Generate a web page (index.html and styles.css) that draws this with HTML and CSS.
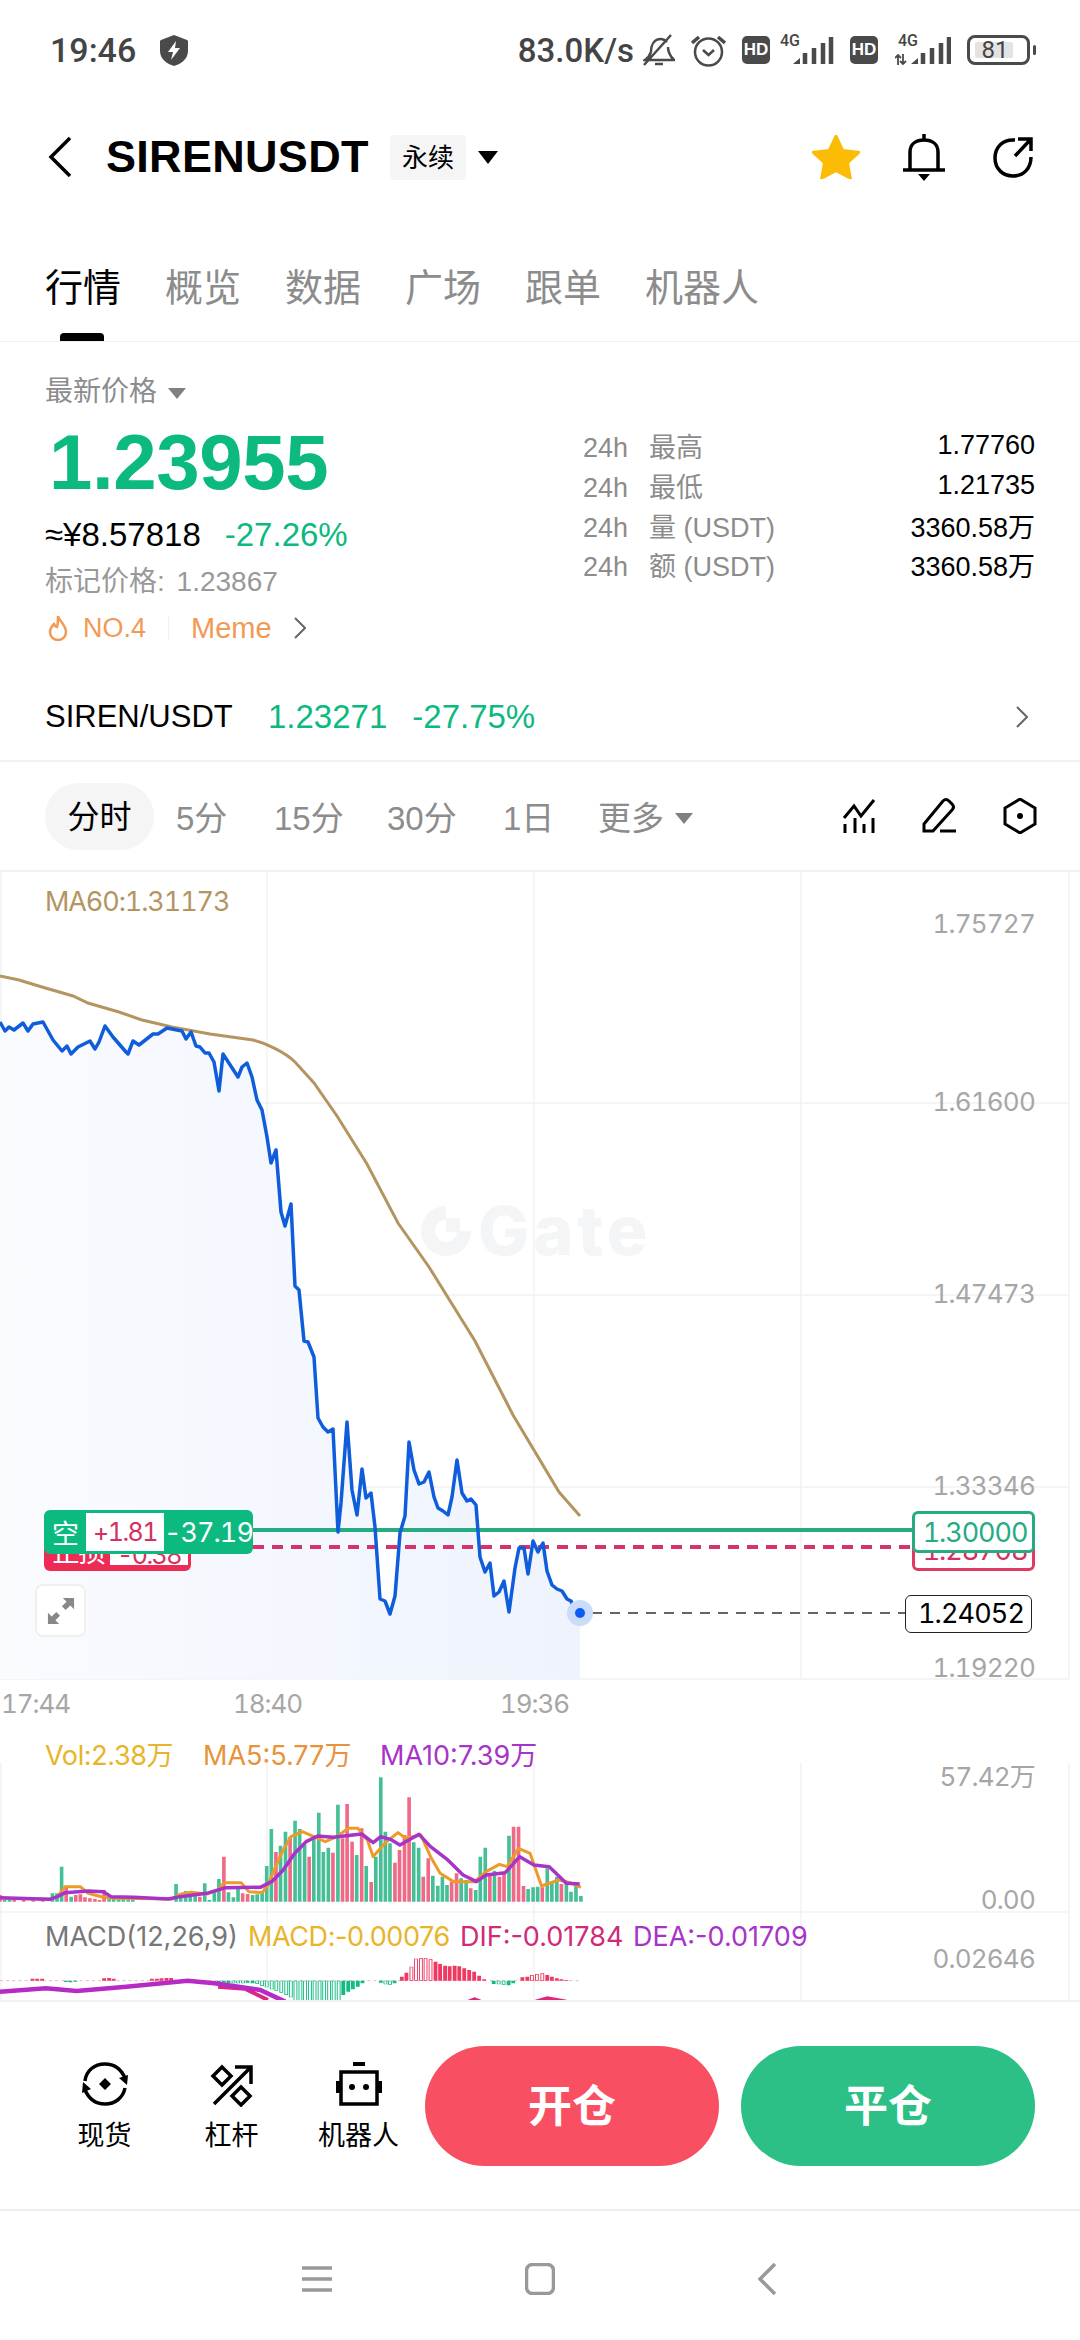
FILE: index.html
```html
<!DOCTYPE html>
<html lang="zh">
<head>
    <meta charset="UTF-8">
    <meta name="viewport" content="width=device-width, initial-scale=1.0">
    <title>SIRENUSDT</title>
    <link rel="stylesheet" href="styles.css">
</head>
<body>
<div class="page">

    <div class="status">
        <div class="status-left">
            <span class="clock">19:46</span>
            <svg class="ico-shield" viewBox="0 0 28 31"><path class="fill-dark" d="M14 0L27 5C28 5.500 28 6 28 7V16C28 24 21 29 14 31C7 29 0 24 0 16V7C0 6 0 5.500 1 5Z"/><path class="fill-white" d="M16 6L8 17H13L11 25L20 13H15Z"/></svg>
        </div>
        <div class="status-right">
            <span class="speed">83.0K/s</span>
            <svg class="ico-belloff" viewBox="0 0 32 32"><path class="line-dark" d="M8 18C8 11 11 5 18 5C20 5 22 6 24 8M25 13C25 18 27 22 31 26H2C5 24 7 21 8 18M12 30H20M28 1L1 31"/></svg>
            <svg class="ico-alarm" viewBox="0 0 35 34"><circle class="line-dark" cx="17.500" cy="19" r="13.500"/><path class="line-thick" d="M1 10L8 4M34 10L27 4"/><path class="line-dark" d="M12 17L17.500 22L23 17"/></svg>
            <span class="hd">HD</span>
            <svg class="ico-net" viewBox="0 -8 54 40"><text class="net-text" x="0" y="12">4G</text><path class="fill-dark" d="M13 30L20 24V30Z"/><path class="bars-dark" d="M25 30V19M34 30V14M43 30V9M51 30V3"/></svg>
            <span class="hd hd-2">HD</span>
            <svg class="ico-net net-2" viewBox="0 -8 56 40"><text class="net-text" x="3" y="12">4G</text><path class="line-thin" d="M3 31V21M0 24L3 21L6 24M8 20V30M5 27L8 30L11 27"/><path class="fill-dark" d="M16 30L23 24V30Z"/><path class="bars-dark" d="M28 30V19M37 30V14M46 30V9M54 30V3"/></svg>
            <span class="battery"><span class="battery-fill"></span><span class="battery-num">81</span></span>
        </div>
    </div>

    <div class="head">
        <div class="head-left">
            <svg class="ico-back" viewBox="0 0 24 40"><path class="line-black" d="M22 1L3 20L22 39"/></svg>
            <span class="symbol">SIRENUSDT</span>
            <span class="perp">永续</span>
            <span class="tri-black"></span>
        </div>
        <div class="head-right">
            <svg class="ico-star" viewBox="0 0 48 44"><path class="fill-star" d="M24 0L31 15L48 17L36 28L39 44L24 36L9 44L12 28L0 17L17 15Z"/></svg>
            <svg class="ico-bell" viewBox="0 0 42 47"><path class="line-black" d="M7 35V18C7 10 13 6 21 6C29 6 35 10 35 18V35M0 36H42M21 0V5"/><path class="fill-black" d="M15 40H27L21 47Z"/></svg>
            <svg class="ico-share" viewBox="0 0 40 41"><path class="line-black" d="M22 3C10 2 2 10 2 21C2 32 10 39 20 39C31 39 38 31 38 20M38 2L22 19M25 2H38V14"/></svg>
        </div>
    </div>

    <div class="tabs">
        <span class="tab tab-on">行情</span>
        <span class="tab">概览</span>
        <span class="tab">数据</span>
        <span class="tab">广场</span>
        <span class="tab">跟单</span>
        <span class="tab">机器人</span>
    </div>

    <div class="quote">
        <div class="quote-left">
            <div class="last-label">最新价格<span class="tri-grey"></span></div>
            <div class="price">1.23955</div>
            <div class="sub"><span>≈¥8.57818</span><span class="green">-27.26%</span></div>
            <div class="mark">标记价格: 1.23867</div>
            <div class="tags">
                <svg class="ico-flame" viewBox="0 0 20 26"><path class="line-orange" d="M10 1C11 6 18 10 18 17C18 22 14 25 10 25C6 25 2 22 2 17C2 13 4 11 6 9C7 11 8 12 9 12C10 9 10 5 10 1Z"/></svg>
                <span class="tag-text">NO.4</span>
                <span class="tag-sep"></span>
                <span class="tag-text tag-meme">Meme</span>
                <svg class="ico-chev" viewBox="0 0 12 22"><path class="line-grey" d="M1 1L11 11L1 21"/></svg>
            </div>
        </div>
        <div class="stats">
            <div class="stat"><span class="stat-name"><i>24h</i>最高</span><b>1.77760</b></div>
            <div class="stat"><span class="stat-name"><i>24h</i>最低</span><b>1.21735</b></div>
            <div class="stat"><span class="stat-name"><i>24h</i>量 (USDT)</span><b>3360.58万</b></div>
            <div class="stat"><span class="stat-name"><i>24h</i>额 (USDT)</span><b>3360.58万</b></div>
        </div>
    </div>

    <div class="spot">
        <span class="spot-name">SIREN/USDT</span>
        <span class="spot-num">1.23271</span>
        <span class="spot-num">-27.75%</span>
        <svg class="ico-chev spot-chev" viewBox="0 0 12 22"><path class="line-grey" d="M1 1L11 11L1 21"/></svg>
    </div>

    <div class="times">
        <span class="time-on">分时</span>
        <span class="time t5">5分</span>
        <span class="time t15">15分</span>
        <span class="time t30">30分</span>
        <span class="time t1d">1日</span>
        <span class="time tmore">更多<span class="tri-grey"></span></span>
        <div class="tools">
            <svg class="ico-tool" viewBox="0 0 36 36"><path class="line-black2" d="M2 20L12 8L19 18L32 2M3 26V35M13 20V35M22 26V35M31 20V35"/></svg>
            <svg class="ico-tool" viewBox="0 0 36 36"><path class="line-black2" d="M2 26L21 3C23 1 25 1 27 3L30 6C32 8 32 10 30 12L11 33H2ZM18 33H34"/></svg>
            <svg class="ico-tool" viewBox="0 0 36 36"><path class="line-black2" d="M18 1L33 10V26L18 35L3 26V10Z"/><circle class="fill-black" cx="18" cy="18" r="3"/></svg>
        </div>
    </div>

    <div class="chart">
        <svg class="chart-svg" viewBox="0 872 1080 853">
            <defs>
                <linearGradient id="area" x1="0" x2="1" y1="0" y2="0">
                    <stop offset="0" stop-color="#fafbff"/>
                    <stop offset="1" stop-color="#eef3fd"/>
                </linearGradient>
            </defs>
            <path class="grid" d="M1 872V1679M267 872V1679M534 872V1679M801 872V1679M1069 872V1679M0 1103H1069M0 1295H1069M0 1487H1069M0 1679H1069"/>
            <path class="watermark-logo" d="M446 1213A18 18 0 1 0 464 1231"/>
            <path class="watermark-mark" d="M446 1218H460V1232H446Z"/>
            <text class="watermark" x="478" y="1255">Gate</text>
            <path class="area" d="M0 1022L5 1031L9 1027L14 1030L23 1023L28 1031L33 1024L43 1022L53 1040L62 1051L67 1046L71 1054L78 1047L90 1041L95 1049L99 1042L105 1026L113 1037L126 1052L128 1054L133 1041L139 1045L153 1034L158 1034L167 1028L182 1031L186 1039L191 1032L196 1046L200 1047L205 1053L209 1053L214 1062L219 1091L223 1054L238 1077L242 1067L247 1063L252 1077L257 1100L262 1110L267 1137L271 1163L276 1150L281 1212L285 1226L291 1204L295 1286L299 1290L304 1341L308 1342L314 1357L318 1418L323 1427L328 1432L333 1429L338 1532L341 1503L347 1422L352 1490L357 1515L362 1469L366 1498L371 1493L375 1527L380 1599L385 1601L390 1614L395 1596L400 1533L405 1516L409 1442L414 1470L419 1484L424 1482L429 1472L434 1497L438 1508L443 1511L448 1515L452 1497L457 1460L462 1493L467 1501L471 1499L476 1505L480 1557L485 1572L490 1563L494 1596L499 1592L504 1581L509 1612L515 1568L519 1548L524 1548L528 1574L533 1541L538 1552L543 1543L547 1571L552 1585L557 1589L562 1591L567 1599L571 1601L576 1613L580 1613L580 1679L0 1679Z"/>
            <path class="ma60" d="M0 976L19 980L42 987L73 996L88 1003L119 1012L142 1020L172 1027L210 1034L253 1040C265 1043 285 1052 295 1062L314 1083L337 1116L367 1164L398 1223L429 1267L475 1341L513 1415L559 1492L580 1516"/>
            <path class="dash-red" d="M253 1547H912"/>
            <path class="pos-line" d="M253 1530H912"/>
            <path class="priceline" d="M0 1022L5 1031L9 1027L14 1030L23 1023L28 1031L33 1024L43 1022L53 1040L62 1051L67 1046L71 1054L78 1047L90 1041L95 1049L99 1042L105 1026L113 1037L126 1052L128 1054L133 1041L139 1045L153 1034L158 1034L167 1028L182 1031L186 1039L191 1032L196 1046L200 1047L205 1053L209 1053L214 1062L219 1091L223 1054L238 1077L242 1067L247 1063L252 1077L257 1100L262 1110L267 1137L271 1163L276 1150L281 1212L285 1226L291 1204L295 1286L299 1290L304 1341L308 1342L314 1357L318 1418L323 1427L328 1432L333 1429L338 1532L341 1503L347 1422L352 1490L357 1515L362 1469L366 1498L371 1493L375 1527L380 1599L385 1601L390 1614L395 1596L400 1533L405 1516L409 1442L414 1470L419 1484L424 1482L429 1472L434 1497L438 1508L443 1511L448 1515L452 1497L457 1460L462 1493L467 1501L471 1499L476 1505L480 1557L485 1572L490 1563L494 1596L499 1592L504 1581L509 1612L515 1568L519 1548L524 1548L528 1574L533 1541L538 1552L543 1543L547 1571L552 1585L557 1589L562 1591L567 1599L571 1601L576 1613L580 1613"/>
            <path class="dash-black" d="M592 1613H905"/>
            <circle class="dot-halo" cx="580" cy="1613" r="13"/>
            <circle class="dot" cx="580" cy="1613" r="5"/>
            <text class="ma60-text" x="45" y="911">MA60:1.31173</text>
            <text class="axis" x="1035" y="933">1.75727</text>
            <text class="axis" x="1035" y="1111">1.61600</text>
            <text class="axis" x="1035" y="1303">1.47473</text>
            <text class="axis" x="1035" y="1495">1.33346</text>
            <text class="axis" x="1035" y="1677">1.19220</text>
            <text class="axis-time" x="1" y="1713">17:44</text>
            <text class="axis-time" x="233" y="1713">18:40</text>
            <text class="axis-time" x="500" y="1713">19:36</text>
        </svg>

        <div class="order order-sl"><span class="order-name">止损</span><span class="order-pnl">-0.38</span></div>
        <div class="order order-pos"><span class="order-name">空</span><span class="order-pnl">+1.81</span><span class="order-val">-37.19</span></div>
        <div class="price-tag tag-sl">1.28708</div>
        <div class="price-tag tag-pos">1.30000</div>
        <div class="last-tag">1.24052</div>
        <div class="expand">
            <svg class="ico-expand" viewBox="0 0 30 30"><path class="fill-grey" d="M17 1H29V13L25 9L20 14L16 10L21 5ZM13 29H1V17L5 21L10 16L14 20L9 25Z"/></svg>
        </div>
    </div>

    <svg class="vol-svg" viewBox="0 1725 1080 275">
        <path class="grid" d="M1 1763V2000M267 1763V2000M534 1763V2000M801 1763V2000M1069 1763V2000M0 1912H1069"/>
        <text class="vol-text c-vol" x="45" y="1765">Vol:2.38万</text>
        <text class="vol-text c-ma5" x="203" y="1765">MA5:5.77万</text>
        <text class="vol-text c-ma10" x="380" y="1765">MA10:7.39万</text>
        <text class="axis" x="1035" y="1786">57.42万</text>
        <text class="axis" x="1035" y="1909">0.00</text>
        <text class="vol-text c-macdname" x="45" y="1946">MACD(12,26,9)</text>
        <text class="vol-text c-vol" x="248" y="1946">MACD:-0.00076</text>
        <text class="vol-text c-dif" x="460" y="1946">DIF:-0.01784</text>
        <text class="vol-text c-ma10" x="633" y="1946">DEA:-0.01709</text>
        <text class="axis" x="1035" y="1968">0.02646</text>
        <!-- bars and lines below are in a 1568 wide space, scaled down to the chart -->
        <g transform="translate(0 1700) scale(0.3827 0.3333)">
            <path class="bar-green" d="M12 605V599M25 605V600M137 605V580M149 605V580M161 605V500M186 605V590M285 605V597M297 605V597M310 605V598M322 605V597M335 605V598M347 605V598M460 605V552M472 605V585M485 605V573M497 605V578M510 605V580M535 605V550M547 605V600M560 605V570M572 605V537M597 605V577M610 605V592M622 605V565M660 605V585M672 605V583M685 605V575M697 605V498M709 605V387M733 605V437M746 605V395M771 605V362M783 605V387M796 605V435M820 605V410M833 605V338M845 605V456M858 605V443M883 605V314M932 605V465M957 605V498M982 605V470M995 605V232M1007 605V395M1019 605V430M1081 605V427M1094 605V443M1131 605V527M1144 605V557M1156 605V530M1168 605V555M1205 605V535M1218 605V540M1243 605V570M1255 605V470M1268 605V443M1292 605V512M1330 605V407M1380 605V567M1393 605V562M1405 605V560M1430 605V505M1442 605V545M1455 605V530M1480 605V545M1492 605V575M1505 605V555M1518 605V588"/>
            <path class="bar-red" d="M0 605V585M37 605V600M62 605V600M87 605V600M112 605V600M173 605V560M198 605V585M210 605V583M222 605V592M235 605V595M248 605V597M260 605V600M272 605V570M522 605V590M585 605V470M634 605V580M647 605V582M721 605V456M758 605V410M808 605V470M870 605V458M895 605V415M907 605V312M920 605V425M945 605V385M970 605V546M1032 605V488M1044 605V450M1057 605V405M1069 605V292M1106 605V530M1119 605V475M1180 605V545M1193 605V520M1230 605V565M1280 605V525M1305 605V530M1317 605V520M1342 605V380M1355 605V380M1368 605V558M1417 605V562M1467 605V552"/>
            <path class="vol-ma5" d="M0 595L130 598L150 590L170 560L210 560L230 580L270 592L300 595L450 597L470 583L500 577L540 582L570 570L585 548L630 548L650 575L685 578L700 555L720 500L740 450L760 410L790 395L820 410L850 425L880 410L910 385L935 385L960 420L975 470L990 450L1010 425L1040 398L1060 415L1100 405L1125 470L1150 520L1185 545L1240 545L1270 515L1305 493L1325 500L1355 445L1385 460L1415 558L1460 540L1490 548L1518 562"/>
            <path class="vol-ma10" d="M0 593L130 598L150 590L170 578L230 573L270 575L290 590L350 592L440 597L470 590L540 580L590 563L680 562L710 545L740 510L770 460L800 425L830 408L870 412L945 402L975 428L995 410L1020 418L1045 435L1095 403L1125 440L1170 480L1210 525L1245 545L1270 525L1320 518L1358 470L1395 495L1435 500L1480 550L1515 552"/>

            <path class="macd-zero" d="M0 842H1520"/>
            <path class="bar-green-2" d="M172 842V846M184 842V847M197 842V845M572 842V846M585 842V848M597 842V850M610 842V850M622 842V850M635 842V850M647 842V848M660 842V850M672 842V852M685 842V858M697 842V862M710 842V868M722 842V872M735 842V878M748 842V885M760 842V892M772 842V900M785 842V902M797 842V902M810 842V902M822 842V902M835 842V902M847 842V902M860 842V902M872 842V902M885 842V902M897 842V885M910 842V875M922 842V868M935 842V860M947 842V850M995 842V848M1007 842V853M1019 842V854M1031 842V850M1290 842V852M1303 842V853M1316 842V854M1329 842V856M1341 842V850"/>
            <path class="bar-white" d="M610 844V848M622 844V848M635 844V848M672 844V850M685 844V856M697 844V860M710 844V866M722 844V870M735 844V876M748 844V883M760 844V890M772 844V902M785 844V902M797 844V902M810 844V902M822 844V902M835 844V902M847 844V902M860 844V902M872 844V902M885 844V902M1007 844V851M1019 844V852M1303 844V851M1316 844V852"/>
            <path class="bar-red-2" d="M85 842V836M97 842V836M110 842V836M272 842V835M285 842V834M297 842V836M397 842V836M410 842V836M422 842V835M435 842V834M447 842V834M1050 842V830M1062 842V818M1075 842V800M1087 842V776M1100 842V775M1112 842V775M1125 842V778M1138 842V785M1150 842V792M1163 842V797M1175 842V799M1188 842V797M1200 842V799M1213 842V805M1226 842V810M1239 842V815M1252 842V827M1265 842V838M1365 842V832M1378 842V830M1390 842V825M1403 842V822M1417 842V820M1430 842V825M1442 842V830M1455 842V835M1467 842V838M1480 842V840"/>
            <path class="bar-white" d="M1075 840V802M1087 840V778M1100 840V777M1112 840V777M1125 840V780M1390 840V827M1403 840V824M1417 840V822"/>
            <path class="macd-dif" d="M570 860L640 866L700 900M1225 905L1240 898L1255 905M1400 905L1430 895L1480 905"/>
            <path class="macd-dea" d="M0 875L120 865L200 873L330 860L490 842L560 850L680 870L745 905"/>
        </g>
    </svg>

    <div class="actions">
        <div class="act">
            <svg class="ico-act" viewBox="0 0 46 46"><path class="line-act" d="M3 20C4 10 12 3 23 3C32 3 39 8 43 17M43 27C41 37 33 43 23 43C14 43 7 38 3 29"/><path class="fill-black" d="M37 17L46 14L45 24ZM9 28L0 32L1 21ZM23 17L29 23L23 29L17 23Z"/></svg>
            <span class="act-name">现货</span>
        </div>
        <div class="act">
            <svg class="ico-act" viewBox="0 0 46 46"><path class="line-act" d="M5 43L41 7M26 6H42V23M13 6L22 15L13 24L4 15ZM32 26L41 35L32 44L23 35Z"/></svg>
            <span class="act-name">杠杆</span>
        </div>
        <div class="act">
            <svg class="ico-act" viewBox="0 0 46 46"><path class="line-act" d="M5 11H41V43H5Z"/><path class="fill-black" d="M17 1H29V5H17ZM0 20H4V32H0ZM42 20H46V32H42Z"/><circle class="fill-black" cx="16" cy="26" r="3"/><circle class="fill-black" cx="30" cy="26" r="3"/></svg>
            <span class="act-name">机器人</span>
        </div>
        <div class="btn btn-open">开仓</div>
        <div class="btn btn-close">平仓</div>
    </div>

    <div class="nav">
        <svg class="nav-menu" viewBox="0 0 30 26"><path class="nav-line" d="M0 2H30M0 13H30M0 24H30"/></svg>
        <svg class="nav-home" viewBox="0 0 30 32"><rect class="nav-line" x="1.500" y="1.500" width="27" height="29" rx="6"/></svg>
        <svg class="nav-back" viewBox="0 0 18 32"><path class="nav-line" d="M17 1L2 16L17 31"/></svg>
    </div>
</div>
</body>
</html>
```

FILE: styles.css
```css
*{
    box-sizing: border-box;
}
body{
    margin: 0;
    background: #fff;
    font-family: Inter, "Noto Sans CJK SC", sans-serif;
    color: #000;
}
svg{display: block;}
.page{
    width: 1080px;
    height: 2340px;
    overflow: hidden;
}

/* status bar */
.status{
    height: 100px;
    padding: 0 45px 0 50px;
    display: flex;
    justify-content: space-between;
    align-items: center;
    color: #444;
}
.status-left, .status-right{
    display: flex;
    align-items: center;
}
.clock{
    font-size: 34px;
    font-weight: 500;
    font-family: Roboto, sans-serif;
    width: 110px;
}
.ico-shield{width: 28px; height: 31px;}
.speed{
    font-size: 33px;
    font-family: Roboto, sans-serif;
    font-weight: 500;
    margin-right: 9px;
}
.ico-belloff{width: 32px; height: 32px; margin-right: 16px;}
.ico-alarm{width: 35px; height: 34px; margin-right: 16px;}
.hd{
    width: 28px;
    height: 28px;
    border-radius: 5px;
    background: #4a4a4a;
    color: #fff;
    font-family: "Liberation Sans", sans-serif;
    font-size: 17px;
    font-weight: bold;
    line-height: 28px;
    text-align: center;
}
.ico-net{width: 54px; height: 40px; margin: -8px 16px 0 10px;}
.net-2{width: 56px; margin: -8px 16px 0 17px;}
.net-text{font: 500 16px Roboto, sans-serif; fill: #444;}
.battery{
    position: relative;
    width: 63px;
    height: 30px;
    border: 3px solid #4a4a4a;
    border-radius: 8px;
    margin-right: 5px;
}
.battery::after{
    content: "";
    position: absolute;
    right: -9px;
    top: 7px;
    width: 3px;
    height: 10px;
    background: #4a4a4a;
    border-radius: 2px;
}
.battery-fill{
    position: absolute;
    left: 5px; top: 4px; bottom: 4px;
    width: 38px;
    background: #e3e3e3;
    border-radius: 2px;
}
.battery-num{
    position: absolute;
    left: 0; right: 7px; top: 0;
    text-align: center;
    font: 24px/24px Roboto, sans-serif;
}

/* header */
.head{
    height: 114px;
    padding: 0 47px 0 48px;
    display: flex;
    justify-content: space-between;
    align-items: center;
}
.head-left, .head-right{
    display: flex;
    align-items: center;
}
.ico-back{width: 24px; height: 40px; margin-right: 34px;}
.symbol{
    font-family: "Liberation Sans", sans-serif;
    font-size: 45px;
    font-weight: bold;
    letter-spacing: 0.300px;
    width: 284px;
}
.perp{
    width: 76px;
    height: 45px;
    background: #f5f5f5;
    border-radius: 4px;
    text-align: center;
    font-size: 26px;
    line-height: 45px;
}
.tri-black{
    margin-left: 12px;
    border-left: 10px solid transparent;
    border-right: 10px solid transparent;
    border-top: 13px solid #000;
}
.ico-star{width: 48px; height: 44px;}
.ico-bell{width: 42px; height: 47px; margin: 0 48px 0 43px;}
.ico-share{width: 40px; height: 41px;}

/* tabs */
.tabs{
    height: 128px;
    padding: 54px 0 0 45px;
    display: flex;
    gap: 44px;
    border-bottom: 1px solid #f0f0f0;
    position: relative;
}
.tab{
    font-size: 38px;
    line-height: 38px;
    color: #8c8c8c;
    height: 38px;
}
.tab-on{color: #000;}
.tab-on::after{
    content: "";
    position: absolute;
    left: 60px;
    bottom: 0;
    width: 44px;
    height: 8px;
    border-radius: 4px 4px 0 0;
    background: #000;
}

/* quote */
.quote{
    height: 332px;
    padding: 35px 45px 0;
    display: flex;
    justify-content: space-between;
}
.last-label{
    font-size: 28px;
    line-height: 28px;
    color: #8c8c8c;
    display: flex;
    align-items: center;
}
.tri-grey{
    margin-left: 11px;
    margin-top: 5px;
    border-left: 9px solid transparent;
    border-right: 9px solid transparent;
    border-top: 11px solid #808080;
}
.price{
    margin: 19px 0 0 4px;
    font-family: "Liberation Sans", sans-serif;
    font-size: 78px;
    line-height: 76px;
    font-weight: bold;
    letter-spacing: -0.400px;
    color: #0cb97f;
}
.sub{
    margin-top: 15px;
    font-size: 33px;
    line-height: 40px;
    display: flex;
    gap: 24px;
    font-family: "Liberation Sans", sans-serif;
}
.green{color: #0cb97f;}
.mark{
    margin-top: 9px;
    font-size: 28px;
    line-height: 36px;
    color: #999;
    word-spacing: 4px;
    font-family: "Liberation Sans", "Noto Sans CJK SC", sans-serif;
}
.tags{
    margin-top: 10px;
    height: 36px;
    display: flex;
    align-items: center;
    padding-left: 3px;
}
.ico-flame{width: 20px; height: 26px; margin-right: 15px;}
.tag-text{
    font-family: "Liberation Sans", sans-serif;
    font-size: 27px;
    color: #f29a55;
}
.tag-meme{font-size: 29px;}
.tag-sep{
    width: 1px;
    height: 24px;
    background: #f0f0f0;
    margin: 0 22px;
}
.ico-chev{width: 12px; height: 22px; margin-left: 22px;}
.stats{
    width: 452px;
    padding-top: 49px;
}
.stat{
    height: 39.700px;
    display: flex;
    justify-content: space-between;
    align-items: center;
    font-size: 27px;
    font-family: "Liberation Sans", "Noto Sans CJK SC", sans-serif;
}
.stat-name{color: #8c8c8c;}
.stat-name i{
    font-style: normal;
    display: inline-block;
    width: 66px;
}
.stat b{font-weight: normal;}

/* spot row */
.spot{
    height: 88px;
    padding: 0 45px;
    display: flex;
    align-items: center;
    border-bottom: 2px solid #f2f2f2;
    font-family: "Liberation Sans", sans-serif;
    font-size: 31px;
}
.spot-name{width: 223px;}
.spot-num{color: #0cb97f; margin-right: 25px; font-size: 33px;}
.spot-chev{margin-left: auto; margin-right: 7px;}

/* interval row */
.times{
    height: 110px;
    padding: 0 42px 0 45px;
    display: flex;
    align-items: center;
    border-bottom: 2px solid #f2f2f2;
    position: relative;
}
.time-on{
    width: 109px;
    height: 67px;
    border-radius: 34px;
    background: #f5f5f5;
    text-align: center;
    font-size: 32px;
    line-height: 67px;
    margin-right: 22px;
}
.time{
    font-size: 33px;
    color: #8c8c8c;
    font-family: "Liberation Sans", "Noto Sans CJK SC", sans-serif;
}
.t5{width: 98px;}
.t15{width: 113px;}
.t30{width: 116px;}
.t1d{width: 95px;}
.tmore{display: flex; align-items: center;}
.tools{
    margin-left: auto;
    display: flex;
    gap: 44px;
}
.ico-tool{width: 36px; height: 36px;}

/* chart */
.chart{
    position: relative;
    height: 853px;
    font-variant-numeric: tabular-nums;
}
.chart-svg{width: 1080px; height: 853px;}
.grid{stroke: #f2f2f2; stroke-width: 1.500; fill: none;}
.watermark{font: 800 68px Inter, sans-serif; fill: #f3f5f6; letter-spacing: 4px;}
.watermark-logo{fill: none; stroke: #f3f5f6; stroke-width: 14;}
.watermark-mark{fill: #f3f5f6;}
.area{fill: url(#area);}
.ma60{fill: none; stroke: #b49561; stroke-width: 3;}
.priceline{fill: none; stroke: #0f5ddb; stroke-width: 3.500; stroke-linejoin: round;}
.pos-line{stroke: #26ab83; stroke-width: 4;}
.dash-red{stroke: #d6336b; stroke-width: 4; stroke-dasharray: 11 8;}
.dash-black{stroke: #333; stroke-width: 1.300; stroke-dasharray: 10 8;}
.dot-halo{fill: #cbdcfa;}
.dot{fill: #0a5cf5;}
.ma60-text{font: 27px Inter, sans-serif; fill: #b49561; font-variant-numeric: tabular-nums; letter-spacing: -1.100px;}
.axis{font: 26px Inter, "Noto Sans CJK SC", sans-serif; fill: #a6a6a6; text-anchor: end; font-variant-numeric: tabular-nums; letter-spacing: -0.800px;}
.axis-time{font: 26px Inter, sans-serif; fill: #a6a6a6; font-variant-numeric: tabular-nums; letter-spacing: -1.100px;}

.order{
    position: absolute;
    left: 44px;
    display: flex;
    align-items: center;
    border-radius: 6px;
    color: #fff;
    font-size: 27px;
    letter-spacing: -1px;
}
.order-sl{
    top: 658px;
    width: 147px;
    height: 41px;
    background: #ee2b54;
    padding: 3px;
}
.order-sl .order-name{width: 63px; text-align: center;}
.order-sl .order-pnl{width: 78px;}
.order-pos{
    top: 638px;
    width: 209px;
    height: 44px;
    background: #0cb97f;
}
.order-name{width: 42px; text-align: center;}
.order-pnl{
    align-self: stretch;
    width: 78px;
    margin: 3px 0;
    background: #fff;
    color: #d6305f;
    text-align: center;
    line-height: 38px;
    font-size: 25px;
    letter-spacing: -1.500px;
}
.order-val{flex: 1; text-align: center;}
.price-tag{
    position: absolute;
    left: 912px;
    width: 123px;
    background: #fff;
    border-radius: 6px;
    text-align: center;
    font-size: 27px;
    letter-spacing: -1.100px;
    padding-left: 3px;
}
.tag-sl{
    top: 658px;
    height: 41px;
    border: 3px solid #e03a62;
    color: #d6305f;
    line-height: 35px;
}
.tag-pos{
    top: 639px;
    height: 42px;
    border: 3px solid #26ab83;
    color: #26ab83;
    line-height: 38px;
}
.last-tag{
    position: absolute;
    left: 905px;
    top: 723px;
    width: 127px;
    height: 38px;
    background: #fff;
    border: 1px solid #222;
    border-radius: 6px;
    text-align: center;
    font-size: 27px;
    letter-spacing: -0.900px;
    line-height: 36px;
    padding-left: 5px;
}
.expand{
    position: absolute;
    left: 35px;
    top: 712px;
    width: 51px;
    height: 53px;
    border: 2px solid #f0f0f0;
    border-radius: 8px;
    background: #fff;
    display: flex;
    align-items: center;
    justify-content: center;
}
.ico-expand{width: 28px; height: 28px;}

/* volume and macd */
.vol-svg{width: 1080px; height: 275px;}
.vol-text{font: 27px Inter, "Noto Sans CJK SC", sans-serif;}
.c-vol{fill: #e8b428; letter-spacing: -0.400px;}
.c-ma5{fill: #e8933a;}
.c-ma10{fill: #a733c9;}
.c-dif{fill: #d02a78;}
.c-macdname{fill: #777;}
.bar-green{stroke: #45c096; stroke-width: 9.500; fill: none;}
.bar-red{stroke: #ef6a86; stroke-width: 9.500; fill: none;}
.bar-green-2{stroke: #12bb83; stroke-width: 10; fill: none;}
.bar-red-2{stroke: #ee3a62; stroke-width: 10; fill: none;}
.bar-white{stroke: #fff; stroke-width: 5; fill: none;}
.macd-zero{stroke: #ee9ab0; stroke-width: 2; stroke-dasharray: 8 8; fill: none;}
.vol-ma5{fill: none; stroke: #ee9a2a; stroke-width: 3; stroke-linejoin: round; vector-effect: non-scaling-stroke;}
.vol-ma10{fill: none; stroke: #a733c9; stroke-width: 3.500; stroke-linejoin: round; vector-effect: non-scaling-stroke;}
.macd-dif{fill: none; stroke: #e0257f; stroke-width: 4; vector-effect: non-scaling-stroke;}
.macd-dea{fill: none; stroke: #b62bc4; stroke-width: 4.500; vector-effect: non-scaling-stroke;}

/* bottom actions */
.actions{
    height: 211px;
    padding: 0 45px 0 41px;
    display: flex;
    align-items: center;
    border-top: 2px solid #f2f2f2;
    border-bottom: 2px solid #eee;
    background: #fff;
}
.act{
    width: 127px;
    display: flex;
    flex-direction: column;
    align-items: center;
    gap: 14px;
}
.ico-act{width: 46px; height: 46px;}
.act-name{font-size: 27px; line-height: 30px;}
.btn{
    width: 294px;
    height: 120px;
    border-radius: 60px;
    text-align: center;
    color: #fff;
    font-size: 44px;
    font-weight: bold;
    line-height: 120px;
}
.btn-open{background: #f84f62; margin-left: 3px;}
.btn-close{background: #2cc087; margin-left: 22px;}

/* nav bar */
.nav{
    height: 129px;
    display: flex;
    align-items: center;
    padding-top: 6px;
}
.nav-line{fill: none; stroke: #999; stroke-width: 3.500;}
.nav-menu{width: 30px; height: 26px; margin-left: 302px;}
.nav-home{width: 30px; height: 32px; margin-left: 193px;}
.nav-back{width: 18px; height: 32px; margin-left: 203px;}

/* shared icon paint */
.fill-dark{fill: #4a4a4a;}
.fill-white{fill: #fff;}
.fill-black{fill: #000;}
.fill-star{fill: #fcbc05; stroke: #fcbc05; stroke-width: 2; stroke-linejoin: round;}
.fill-grey{fill: #888;}
.line-dark{fill: none; stroke: #4a4a4a; stroke-width: 2.500;}
.line-thick{fill: none; stroke: #4a4a4a; stroke-width: 3.500;}
.line-thin{fill: none; stroke: #4a4a4a; stroke-width: 1.800;}
.bars-dark{fill: none; stroke: #4a4a4a; stroke-width: 4.500;}
.line-black{fill: none; stroke: #000; stroke-width: 3.500;}
.line-black2{fill: none; stroke: #000; stroke-width: 3;}
.line-act{fill: none; stroke: #000; stroke-width: 3.500;}
.line-orange{fill: none; stroke: #f29a55; stroke-width: 2.500;}
.line-grey{fill: none; stroke: #666; stroke-width: 2;}
```
